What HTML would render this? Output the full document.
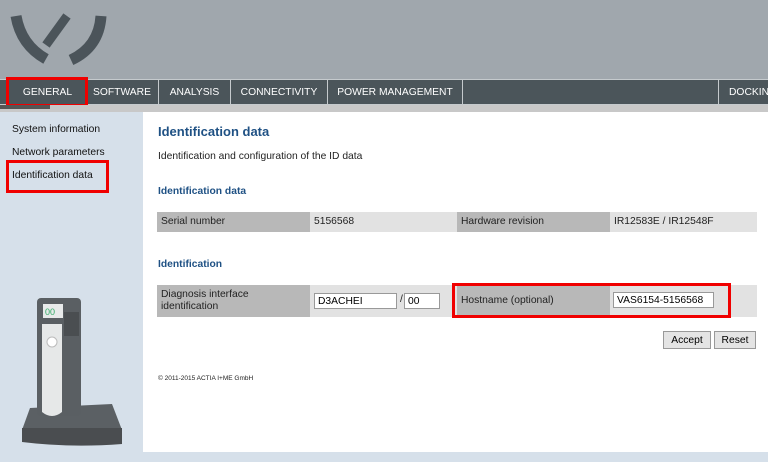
<!DOCTYPE html>
<html><head><style>
*{margin:0;padding:0;box-sizing:border-box}
body{width:768px;height:462px;overflow:hidden;background:#d6e0ea;font-family:"Liberation Sans",Arial,sans-serif;position:relative}
.abs{position:absolute}
#hdr{left:0;top:0;width:768px;height:79px;background:#a0a7ad}
#nav{left:0;top:79px;width:768px;height:26px;background:#4b555a;border-top:1px solid #c5cacd;border-bottom:1px solid #c5cacd}
.ni{position:absolute;top:0;height:24px;line-height:25px;color:#fff;font-size:10.3px;text-align:center;border-left:1px solid #c5cacd}
#stripe{left:0;top:105px;width:768px;height:7px;background:#c8c8c8}
#side{left:0;top:112px;width:143px;height:350px;background:#d6e0ea}
.sl{position:absolute;left:12px;font-size:10.3px;color:#111}
#main{left:143px;top:112px;width:625px;height:340px;background:#fff}
.t{position:absolute;font-size:10.3px;color:#222}
.cell{position:absolute;font-size:10.3px;color:#222;padding-left:4px}
.red{position:absolute;border:3px solid #f00000}
input{position:absolute;font:10.3px "Liberation Sans",sans-serif;border:1px solid #999;padding-left:3px;height:16px;background:#fff}
.btn{position:absolute;font-size:10.3px;background:#e4e4e4;border:1px solid #999;text-align:center;line-height:17px;height:18px}
</style></head><body>
<div id="hdr" class="abs">
<svg width="110" height="70" style="position:absolute;left:0;top:0">
<path d="M16 16 Q21 45 46 59" stroke="#4b545a" stroke-width="11" fill="none"/>
<path d="M67 16 L46 45" stroke="#4b545a" stroke-width="9" fill="none"/>
<path d="M101 16 Q99 47 71 60" stroke="#4b545a" stroke-width="11" fill="none"/>
</svg>
</div>
<div id="nav" class="abs">
<div class="ni" style="left:8px;width:78px">GENERAL</div>
<div class="ni" style="left:86px;width:72px;border-left:none">SOFTWARE</div>
<div class="ni" style="left:158px;width:72px">ANALYSIS</div>
<div class="ni" style="left:230px;width:97px">CONNECTIVITY</div>
<div class="ni" style="left:327px;width:135px">POWER MANAGEMENT</div>
<div class="ni" style="left:462px;width:256px"></div>
<div class="ni" style="left:718px;width:60px;text-align:left;padding-left:10px">DOCKING</div>
</div>
<div class="red" style="left:6px;top:77px;width:82px;height:30px"></div>
<div id="stripe" class="abs"><div style="width:50px;height:4px;background:#555"></div></div>
<div id="side" class="abs">
<div class="sl" style="top:12px">System information</div>
<div class="sl" style="top:35px">Network parameters</div>
<div class="sl" style="top:58px">Identification data</div>
<svg width="140" height="170" style="position:absolute;left:0;top:180px">
<path d="M22 138 L30 116 L112 112 L122 138 L122 148 L22 148 Z" fill="#5b6064"/>
<path d="M22 136 L122 136 L122 152 Q70 156 22 150Z" fill="#4a4d50"/>
<rect x="37" y="6" width="44" height="118" rx="4" fill="#5a5f63"/>
<rect x="43" y="12" width="20" height="14" fill="#e8eaea"/>
<text x="45" y="23" font-size="9" fill="#3a6" font-family="Liberation Sans">00</text>
<path d="M42 32 L62 32 L62 120 Q52 128 42 120 Z" fill="#e6e8e8"/>
<circle cx="52" cy="50" r="5" fill="#fff" stroke="#bbb"/>
<rect x="64" y="20" width="15" height="24" fill="#4a4e51"/>
</svg>
</div>
<div class="red" style="left:6px;top:160px;width:103px;height:33px"></div>
<div id="main" class="abs"></div>
<div class="t" style="left:158px;top:124px;font-size:13px;font-weight:bold;color:#1f5184">Identification data</div>
<div class="t" style="left:158px;top:151px">Identification and configuration of the ID data</div>
<div class="t" style="left:158px;top:186px;font-weight:bold;color:#1f5184">Identification data</div>
<div class="cell" style="left:157px;top:212px;width:153px;height:20px;background:#b8b8b8;line-height:20px">Serial number</div>
<div class="cell" style="left:310px;top:212px;width:150px;height:20px;background:#e2e2e2;line-height:20px">5156568</div>
<div class="cell" style="left:457px;top:212px;width:153px;height:20px;background:#b8b8b8;line-height:20px">Hardware revision</div>
<div class="cell" style="left:610px;top:212px;width:147px;height:20px;background:#e2e2e2;line-height:20px">IR12583E / IR12548F</div>
<div class="t" style="left:158px;top:259px;font-weight:bold;color:#1f5184">Identification</div>
<div class="cell" style="left:157px;top:285px;width:153px;height:32px;background:#b8b8b8;padding-top:4px;line-height:12px">Diagnosis interface<br>identification</div>
<div class="cell" style="left:310px;top:285px;width:150px;height:32px;background:#e2e2e2"></div>
<div class="cell" style="left:457px;top:285px;width:153px;height:32px;background:#b8b8b8;line-height:32px">Hostname (optional)</div>
<div class="cell" style="left:610px;top:285px;width:147px;height:32px;background:#e2e2e2"></div>
<input style="left:314px;top:293px;width:83px" value="D3ACHEI">
<div class="t" style="left:400px;top:294px">/</div>
<input style="left:404px;top:293px;width:36px" value="00">
<input style="left:613px;top:292px;width:101px" value="VAS6154-5156568">
<div class="red" style="left:452px;top:283px;width:279px;height:35px"></div>
<div class="btn" style="left:663px;top:331px;width:48px">Accept</div>
<div class="btn" style="left:714px;top:331px;width:42px">Reset</div>
<div class="t" style="left:158px;top:375px;font-size:6.5px">© 2011-2015 ACTIA I+ME GmbH</div>
</body></html>
